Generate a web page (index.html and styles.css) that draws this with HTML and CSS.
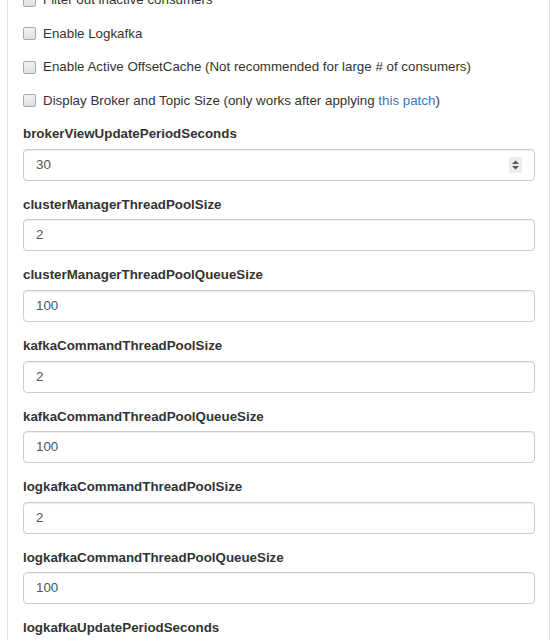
FILE: index.html
```html
<!DOCTYPE html>
<html>
<head>
<meta charset="utf-8">
<link rel="stylesheet" href="styles.css">
</head>
<body>
<div class="panel">
  <div class="checkbox"><span class="box"></span><span>Filter out inactive consumers</span></div>
  <div class="checkbox"><span class="box"></span><span>Enable Logkafka</span></div>
  <div class="checkbox"><span class="box"></span><span>Enable Active OffsetCache (Not recommended for large # of consumers)</span></div>
  <div class="checkbox"><span class="box"></span><span>Display Broker and Topic Size (only works after applying <a class="link" href="#">this patch</a>)</span></div>

  <div class="group">
    <div class="label">brokerViewUpdatePeriodSeconds</div>
    <div class="field">
      <div class="input">30</div>
      <span class="spin">
        <svg width="13" height="16" viewBox="0 0 13 16"><rect width="13" height="16" fill="#ececec"/><polygon points="3,7 6.5,3.5 10,7" fill="#555"/><polygon points="3,9 10,9 6.5,12.5" fill="#555"/></svg>
      </span>
    </div>
  </div>
  <div class="group">
    <div class="label">clusterManagerThreadPoolSize</div>
    <div class="field"><div class="input">2</div></div>
  </div>
  <div class="group">
    <div class="label">clusterManagerThreadPoolQueueSize</div>
    <div class="field"><div class="input">100</div></div>
  </div>
  <div class="group">
    <div class="label">kafkaCommandThreadPoolSize</div>
    <div class="field"><div class="input">2</div></div>
  </div>
  <div class="group">
    <div class="label">kafkaCommandThreadPoolQueueSize</div>
    <div class="field"><div class="input">100</div></div>
  </div>
  <div class="group">
    <div class="label">logkafkaCommandThreadPoolSize</div>
    <div class="field"><div class="input">2</div></div>
  </div>
  <div class="group">
    <div class="label">logkafkaCommandThreadPoolQueueSize</div>
    <div class="field"><div class="input">100</div></div>
  </div>
  <div class="group last">
    <div class="label">logkafkaUpdatePeriodSeconds</div>
  </div>
</div>
</body>
</html>
```

FILE: styles.css
```css
html, body {
  margin: 0;
  padding: 0;
  background: #fff;
  overflow: hidden;
}
body {
  font-family: "Liberation Sans", Arial, sans-serif;
  font-size: 13.33px;
  color: #333;
}
.panel {
  margin: -9px 0 0 7px;
  width: 543px;
  min-height: 700px;
  box-sizing: border-box;
  border-left: 1px solid #e3e3e3;
  border-right: 1px solid #e3e3e3;
  padding: 0 14px 0 15px;
}
.checkbox {
  display: flex;
  align-items: center;
  height: 18.57px;
  line-height: 18.57px;
  margin-bottom: 15px;
  white-space: nowrap;
}
.box {
  width: 11px;
  height: 11px;
  border: 1px solid #a9a9a9;
  border-radius: 2px;
  background: linear-gradient(#f4f4f4, #dedede);
  margin-right: 7px;
  flex: none;
}
.link {
  color: #337ab7;
  text-decoration: none;
}
.group {
  margin-bottom: 15px;
}
.label {
  font-weight: bold;
  line-height: 18.57px;
  margin-bottom: 5px;
}
.field {
  position: relative;
}
.input {
  height: 32px;
  box-sizing: border-box;
  border: 1px solid #ccc;
  border-radius: 4px;
  padding: 0 12px;
  line-height: 30px;
  color: #555;
  box-shadow: inset 0 1px 1px rgba(0,0,0,.075);
}
.spin {
  position: absolute;
  right: 13px;
  top: 8px;
  width: 13px;
  height: 16px;
  display: block;
}
.spin svg {
  display: block;
}
```
